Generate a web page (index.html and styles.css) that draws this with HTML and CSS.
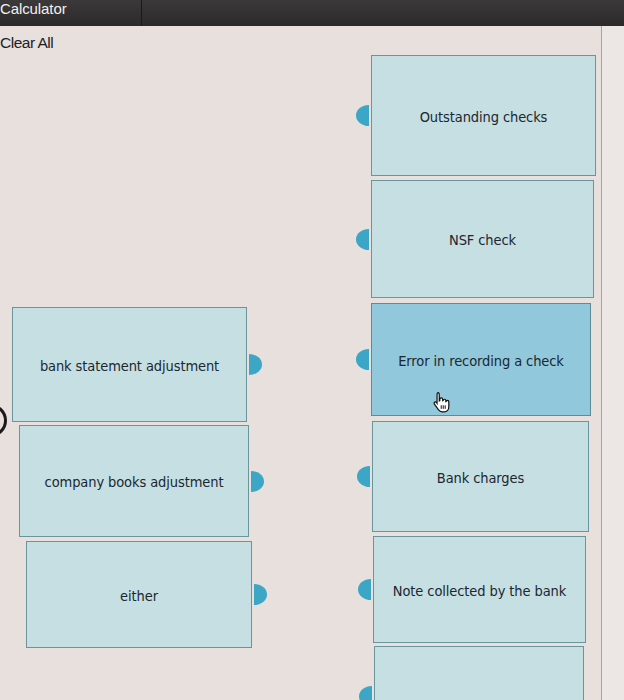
FILE: index.html
```html
<!DOCTYPE html>
<html lang="en">
<head>
    <meta charset="UTF-8">
    <meta name="viewport" content="width=device-width, initial-scale=1.0">
    <title>Calculator - Matching</title>
    <link rel="stylesheet" href="styles.css">
</head>
<body>
    <header class="topbar">
        <div class="tab">Calculator</div>
        <div class="tab-rest"></div>
    </header>

    <main class="workspace">
        <div class="board">
            <div class="clear-all">Clear All</div>

            <div class="match">
                <div class="sources">
                    <div class="source">
                        <div class="card">bank statement adjustment</div>
                        <span class="dot dot-right"></span>
                    </div>
                    <div class="source">
                        <div class="card">company books adjustment</div>
                        <span class="dot dot-right"></span>
                    </div>
                    <div class="source">
                        <div class="card">either</div>
                        <span class="dot dot-right"></span>
                    </div>
                </div>

                <div class="targets">
                    <div class="target">
                        <span class="dot dot-left"></span>
                        <div class="card">Outstanding checks</div>
                    </div>
                    <div class="target">
                        <span class="dot dot-left"></span>
                        <div class="card">NSF check</div>
                    </div>
                    <div class="target">
                        <span class="dot dot-left"></span>
                        <div class="card hover">Error in recording a check</div>
                    </div>
                    <div class="target">
                        <span class="dot dot-left"></span>
                        <div class="card">Bank charges</div>
                    </div>
                    <div class="target">
                        <span class="dot dot-left"></span>
                        <div class="card">Note collected by the bank</div>
                    </div>
                    <div class="target">
                        <span class="dot dot-left"></span>
                        <div class="card"></div>
                    </div>
                </div>
            </div>
        </div>
        <div class="side"></div>
    </main>

    <!-- stray handle peeking in from the left edge -->
    <span class="ring"></span>

    <!-- mouse pointer over the hovered card -->
    <svg class="pointer" width="20" height="22" viewBox="0 0 18 20">
        <path d="M5 1.5c.9 0 1.5.6 1.5 1.5v6l.5-.1V7.6c0-.8.6-1.3 1.3-1.3s1.3.5 1.3 1.3v1.2l.4-.1c0-.8.6-1.2 1.3-1.2s1.2.5 1.2 1.2v1l.3-.1c.1-.6.6-1 1.2-1 .7 0 1.2.5 1.2 1.2v4.4c0 2.6-1.6 4.8-4.3 4.8H9.2c-1.6 0-2.6-.7-3.5-2L2 11.7c-.4-.6-.2-1.3.4-1.6.5-.3 1.1-.2 1.5.3l.6.8V3c0-.9.6-1.5 1.5-1.5z" fill="#fff" stroke="#111" stroke-width="1.1"/>
        <path d="M8.3 13v3.2M10.1 13v3.2M11.9 13v3.2" stroke="#111" stroke-width="0.9"/>
    </svg>
</body>
</html>
```

FILE: styles.css
```css
body {
    margin: 0;
    width: 624px;
    height: 700px;
    overflow: hidden;
    background-color: #e7e0dc;
    font-family: "DejaVu Sans", Verdana, sans-serif;
    font-stretch: condensed;
    position: relative;
}

.topbar {
    display: flex;
    height: 26px;
    background: linear-gradient(#3b3939, #2b2929);
}
.tab {
    width: 141px;
    border-right: 1px solid #1a1919;
    color: #f2f0ee;
    font-family: "Liberation Sans", Arial, sans-serif;
    font-size: 15px;
    line-height: 18px;
    letter-spacing: -0.1px;
}
.tab-rest {
    flex: 1;
}

.workspace {
    display: flex;
    height: 674px;
    overflow: hidden;
}
.board {
    width: 601px;
    border-right: 1px solid #aaa4a0;
    position: relative;
}
.side {
    flex: 1;
    background-color: #ece7e4;
}

.clear-all {
    padding-top: 8px;
    height: 20px;
    color: #1d2226;
    font-family: "Liberation Sans", Arial, sans-serif;
    font-size: 15.5px;
    line-height: 18px;
    letter-spacing: -0.5px;
}

.match {
    display: flex;
    align-items: flex-start;
    margin-top: 1px;
}

/* left column: answer categories */
.sources {
    display: flex;
    flex-direction: column;
    gap: 3px;
    padding-top: 252px;
    padding-left: 12px;
    width: 344px;
    flex-shrink: 0;
}
.source {
    display: flex;
    align-items: center;
    gap: 2px;
}
.source .card {
    width: 235px;
    height: 115px;
}
.source:nth-child(2) {
    margin-left: 7px;
}
.source:nth-child(2) .card {
    width: 230px;
    height: 112px;
}
.source:nth-child(3) {
    margin-left: 14px;
    margin-top: 1px;
}
.source:nth-child(3) .card {
    width: 226px;
    height: 107px;
}

/* right column: items to be matched */
.targets {
    display: flex;
    flex-direction: column;
    gap: 4px;
    flex-shrink: 0;
}
.target {
    display: flex;
    align-items: center;
    gap: 2px;
}
.target .card {
    width: 225px;
    height: 121px;
}
.target:nth-child(2) .card {
    width: 223px;
    height: 118px;
}
.target:nth-child(3) {
    margin-top: 1px;
}
.target:nth-child(3) .card {
    width: 220px;
    height: 113px;
}
.target:nth-child(4) {
    margin-left: 1px;
    margin-top: 1px;
}
.target:nth-child(4) .card {
    width: 217px;
    height: 111px;
}
.target:nth-child(5) {
    margin-left: 2px;
}
.target:nth-child(5) .card {
    width: 213px;
    height: 107px;
}
.target:nth-child(6) {
    margin-left: 3px;
    margin-top: -1px;
}
.target:nth-child(6) .card {
    width: 210px;
    height: 100px;
}

.card {
    display: flex;
    align-items: center;
    justify-content: center;
    flex-shrink: 0;
    box-sizing: border-box;
    padding-top: 2px;
    background-color: #c6dfe2;
    border: 1.5px solid #6b959c;
    color: #1a2731;
    font-size: 14.5px;
    letter-spacing: -0.1px;
}
.card.hover {
    background-color: #92c8dc;
    border-color: #5d8c98;
}

.dot {
    display: block;
    flex-shrink: 0;
    width: 13px;
    height: 21px;
    background-color: #3ba6c6;
}
.dot-right {
    border-radius: 0 13px 13px 0 / 0 10.5px 10.5px 0;
}
.dot-left {
    border-radius: 13px 0 0 13px / 10.5px 0 0 10.5px;
}

.ring {
    position: absolute;
    left: -26px;
    top: 404px;
    width: 27px;
    height: 27px;
    border: 3px solid #1b1b1b;
    border-radius: 50%;
}

.pointer {
    position: absolute;
    left: 432px;
    top: 391px;
}
```
